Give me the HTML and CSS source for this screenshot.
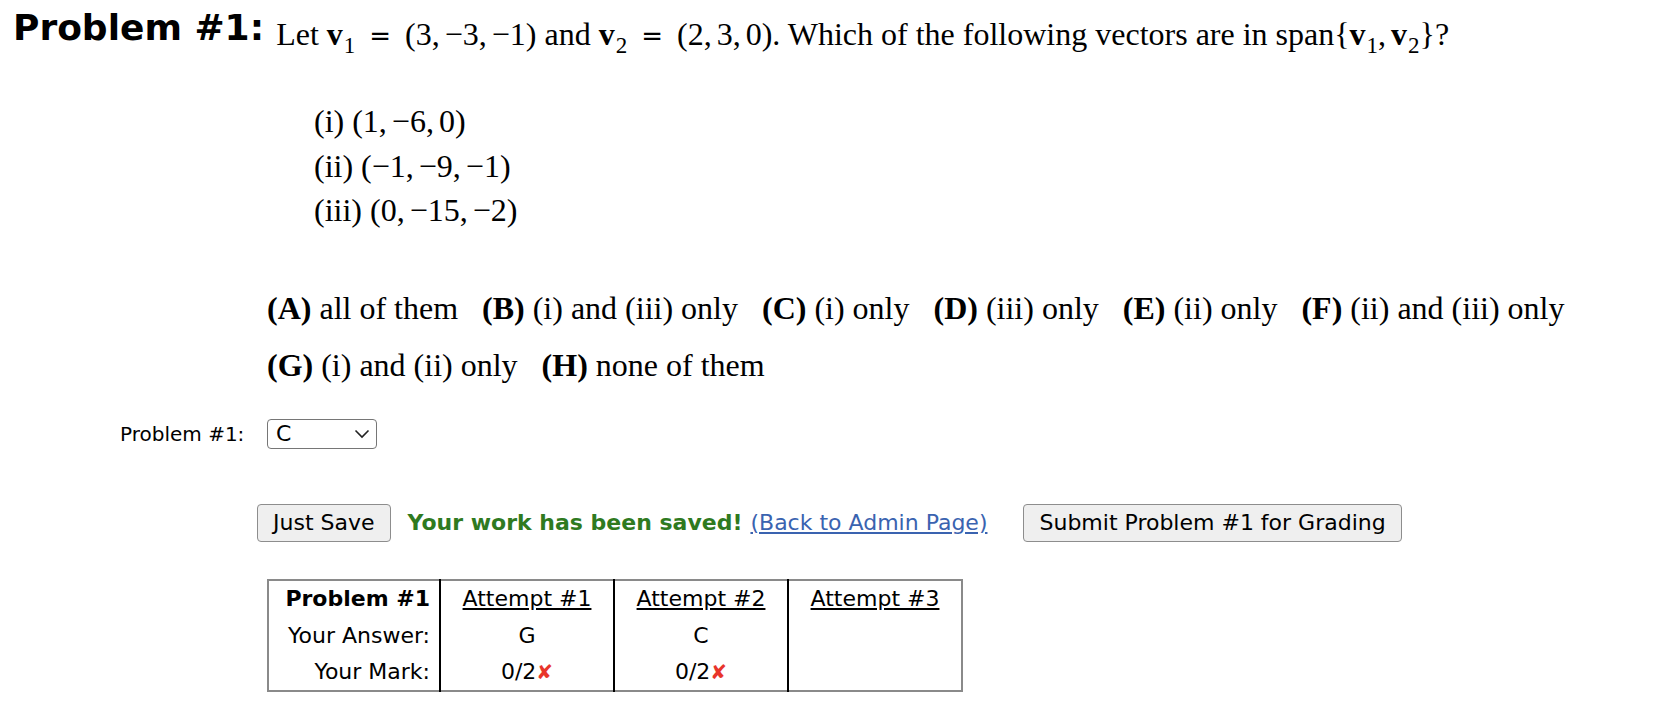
FILE: index.html
```html
<!DOCTYPE html>
<html>
<head>
<meta charset="utf-8">
<link rel="stylesheet" href="styles.css">
</head>
<body>
<div class="page">
  <div class="stmt">
    <span class="ptitle">Problem #1:</span>
    <span class="math">Let <b>v</b><span class="sub">1</span><span class="eq">=</span>(3,<span class="c"></span>−3,<span class="c"></span>−1) and <b>v</b><span class="sub">2</span><span class="eq">=</span>(2,<span class="c"></span>3,<span class="c"></span>0). Which of the following vectors are in span{<b>v</b><span class="sub">1</span>,<span class="c"></span><b>v</b><span class="sub">2</span>}?</span>
  </div>

  <div class="items">
    <div class="item">(i) (1,<span class="c"></span>−6,<span class="c"></span>0)</div>
    <div class="item">(ii) (−1,<span class="c"></span>−9,<span class="c"></span>−1)</div>
    <div class="item">(iii) (0,<span class="c"></span>−15,<span class="c"></span>−2)</div>
  </div>

  <div class="options">
    <div class="optrow">
      <span class="opt"><b>(A)</b> all of them</span>
      <span class="opt"><b>(B)</b> (i) and (iii) only</span>
      <span class="opt"><b>(C)</b> (i) only</span>
      <span class="opt"><b>(D)</b> (iii) only</span>
      <span class="opt"><b>(E)</b> (ii) only</span>
      <span class="opt"><b>(F)</b> (ii) and (iii) only</span>
    </div>
    <div class="optrow">
      <span class="opt"><b>(G)</b> (i) and (ii) only</span>
      <span class="opt"><b>(H)</b> none of them</span>
    </div>
  </div>

  <div class="answer">
    <span class="alabel">Problem #1:</span>
    <div class="select">
      <span class="selval">C</span>
      <svg class="chev" width="16" height="10" viewBox="0 0 16 10"><path d="M1.5 1.5 L8 8 L14.5 1.5" fill="none" stroke="#222" stroke-width="1.6"/></svg>
    </div>
  </div>

  <div class="actions">
    <span class="btn">Just Save</span>
    <span class="saved">Your work has been saved!</span>
    <a class="back" href="#">(Back to Admin Page)</a>
    <span class="btn submit">Submit Problem #1 for Grading</span>
  </div>

  <table class="attempts">
    <colgroup>
      <col class="c-lbl">
      <col class="c-att">
      <col class="c-att">
      <col class="c-att">
    </colgroup>
    <tr>
      <th class="lbl">Problem #1</th>
      <td><u>Attempt #1</u></td>
      <td><u>Attempt #2</u></td>
      <td><u>Attempt #3</u></td>
    </tr>
    <tr>
      <td class="lbl">Your Answer:</td>
      <td>G</td>
      <td>C</td>
      <td></td>
    </tr>
    <tr>
      <td class="lbl">Your Mark:</td>
      <td>0/2<span class="x">✘</span></td>
      <td>0/2<span class="x">✘</span></td>
      <td></td>
    </tr>
  </table>
</div>
</body>
</html>
```

FILE: styles.css
```css
html, body {
  margin: 0;
  padding: 0;
  background: #ffffff;
  color: #000000;
}

.page {
  padding: 4px 0 0 13px;
  font-family: "DejaVu Sans", Verdana, sans-serif;
}

.stmt {
  height: 48px;
  line-height: 48px;
  white-space: nowrap;
}

.ptitle {
  font-family: "DejaVu Sans", Verdana, sans-serif;
  font-weight: bold;
  font-size: 36px;
}

.math, .items, .options {
  font-family: "Liberation Serif", "Times New Roman", serif;
  font-size: 32px;
}

.math {
  margin-left: 7px;
  vertical-align: -5px;
}

.sub {
  font-size: 23px;
  position: relative;
  top: 8px;
  margin-left: 1px;
  line-height: 0;
}

.eq {
  font-family: "DejaVu Sans", sans-serif;
  font-size: 26px;
  padding: 0 14px;
}

.c {
  display: inline-block;
  width: 5px;
}

.items {
  margin: 47px 0 0 301px;
  line-height: 44.5px;
}

.options {
  margin: 47px 0 0 254px;
  line-height: 57px;
}

.optrow {
  white-space: nowrap;
}

.opt {
  margin-right: 16px;
}

.answer {
  display: flex;
  align-items: center;
  margin: 25px 0 0 107px;
  height: 30px;
}

.alabel {
  font-size: 20px;
  width: 147px;
}

.select {
  box-sizing: border-box;
  width: 110px;
  height: 30px;
  border: 1.5px solid #767676;
  border-radius: 4px;
  display: flex;
  align-items: center;
  justify-content: space-between;
  padding: 0 6px 0 8px;
  font-size: 22px;
}

.chev {
  display: block;
}

.actions {
  display: flex;
  align-items: center;
  margin: 55px 0 0 244px;
  height: 38px;
  font-size: 22px;
  white-space: nowrap;
}

.btn {
  box-sizing: border-box;
  height: 38px;
  line-height: 35px;
  padding: 0 15px;
  border: 1.5px solid #8d8d8d;
  border-radius: 4px;
  background: #efefef;
}

.saved {
  margin-left: 17px;
  font-weight: bold;
  color: #2f7a1f;
}

.back {
  margin-left: 8px;
  color: #3a63b0;
  text-decoration: underline;
}

.submit {
  margin-left: 36px;
}

.attempts {
  margin: 37px 0 0 254px;
  border-collapse: collapse;
  border: 2.5px solid #8a8a8a;
  table-layout: fixed;
  width: 695px;
  font-size: 22px;
}

.c-lbl {
  width: 172px;
}

.c-att {
  width: 174px;
}

.attempts th, .attempts td {
  padding: 0;
  height: 36.5px;
  text-align: center;
  font-weight: normal;
  white-space: nowrap;
}

.attempts tr > * + * {
  border-left: 2px solid #000;
}

.attempts .lbl {
  text-align: right;
  padding-right: 9px;
}

.attempts th.lbl {
  font-weight: bold;
}

.x {
  color: #e8352a;
  font-size: 20px;
  font-weight: bold;
}
```
